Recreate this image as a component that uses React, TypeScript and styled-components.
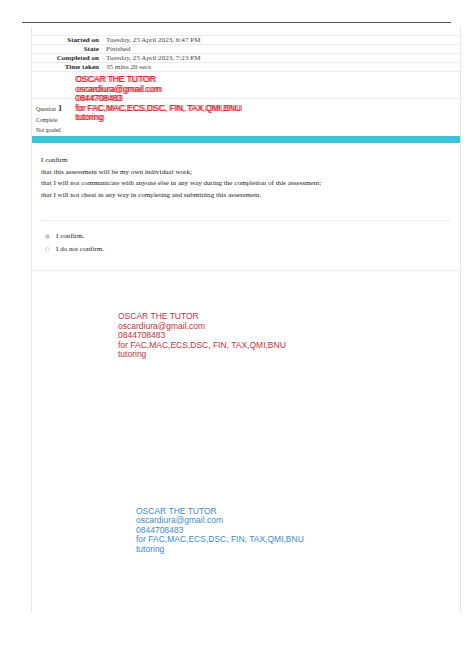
import styled, { createGlobalStyle } from "styled-components";

const GlobalStyle = createGlobalStyle`
  html, body {
    margin: 0;
    padding: 0;
    background: #ffffff;
  }
  body {
    font-family: "Liberation Serif", "Times New Roman", serif;
  }
`;

const Page = styled.div`
  width: 474px;
  height: 672px;
  overflow: hidden;
  padding-top: 22px;
  box-sizing: border-box;
`;

const TopRule = styled.div`
  margin-left: 22px;
  width: 429px;
  border-top: 1px solid #555;
`;

const Panel = styled.div`
  position: relative;
  margin: 4px 0 0 31px;
  width: 430px;
  height: 585px;
  border-left: 1px solid #e4e4e4;
  border-right: 1px solid #e4e4e4;
  box-sizing: border-box;
`;

const SummaryRow = styled.div<{ $h?: number }>`
  display: flex;
  align-items: center;
  height: ${(p) => p.$h ?? 9}px;
  border-top: 1px solid #ececec;
  box-sizing: border-box;
  font-size: 7.1px;
`;

const Label = styled.div`
  width: 67px;
  text-align: right;
  font-weight: bold;
  color: #2a2a2a;
`;

const Value = styled.div`
  margin-left: 7px;
  color: #4a4a4a;
`;

const Stamp = styled.div`
  position: absolute;
  left: 43px;
  top: 48px;
  font-family: "Liberation Sans", Arial, sans-serif;
  font-size: 8.6px;
  line-height: 9.6px;
  color: #d4111c;
  letter-spacing: -0.1px;
  text-shadow: 1.5px 0 0 rgba(212, 17, 28, 0.75);
  pointer-events: none;
`;

const QuestionInfo = styled.div`
  height: 38px;
  border-top: 1px solid #ececec;
  padding: 4px 0 0 4px;
  box-sizing: border-box;
  font-size: 5.5px;
  color: #333;
  line-height: 10.5px;
`;

const QNum = styled.span`
  font-size: 8.5px;
  font-weight: bold;
  margin-left: 2px;
`;

const TealBar = styled.div`
  height: 7px;
  background: #3cc3d6;
`;

const Content = styled.div`
  height: 128px;
  padding: 12px 9px 0 9px;
  border-bottom: 1px solid #ececec;
  box-sizing: border-box;
  font-size: 7.1px;
  color: #222;
`;

const Para = styled.div`
  line-height: 11.7px;
`;

const Separator = styled.div`
  margin-top: 18px;
  border-top: 1px solid #efefef;
`;

const Answers = styled.div`
  padding: 12px 0 0 4px;
  display: flex;
  flex-direction: column;
  gap: 6px;
`;

const Choice = styled.label`
  display: flex;
  align-items: center;
  gap: 6px;
  height: 7px;
`;

const Radio = styled.span<{ $checked?: boolean }>`
  width: 5px;
  height: 5px;
  border-radius: 50%;
  border: 1px solid #d6d6d6;
  background: ${(p) => (p.$checked ? "#c4c4c4" : "#fff")};
  box-sizing: border-box;
`;

const Watermark = styled.div<{ $color: string; $left: number; $top: number }>`
  margin: ${(p) => p.$top}px 0 0 ${(p) => p.$left}px;
  font-family: "Liberation Sans", Arial, sans-serif;
  font-size: 8.5px;
  line-height: 9.5px;
  color: ${(p) => p.$color};
`;

const stampLines = [
  "OSCAR THE TUTOR",
  "oscardiura@gmail.com",
  "0844708483",
  "for FAC,MAC,ECS,DSC, FIN, TAX,QMI,BNU",
  "tutoring",
];

const summary = [
  ["Started on", "Tuesday, 25 April 2023, 6:47 PM"],
  ["State", "Finished"],
  ["Completed on", "Tuesday, 25 April 2023, 7:23 PM"],
  ["Time taken", "35 mins 20 secs"],
];

function Lines({ lines }: { lines: string[] }) {
  return (
    <>
      {lines.map((l) => (
        <div key={l}>{l}</div>
      ))}
    </>
  );
}

export default function App() {
  return (
    <Page>
      <GlobalStyle />
      <TopRule />
      <Panel>
        <SummaryRow $h={8} style={{ borderTop: "none" }} />
        {summary.map(([k, v]) => (
          <SummaryRow key={k}>
            <Label>{k}</Label>
            <Value>{v}</Value>
          </SummaryRow>
        ))}
        <SummaryRow $h={27} />
        <QuestionInfo>
          <div>
            Question<QNum>1</QNum>
          </div>
          <div>Complete</div>
          <div>Not graded</div>
        </QuestionInfo>
        <TealBar />
        <Content>
          <Para>I confirm</Para>
          <Para>that this assessment will be my own individual work;</Para>
          <Para>
            that I will not communicate with anyone else in any way during the completion of this
            assessment;
          </Para>
          <Para>that I will not cheat in any way in completing and submitting this assessment.</Para>
          <Separator />
          <Answers>
            <Choice>
              <Radio $checked />
              I confirm.
            </Choice>
            <Choice>
              <Radio />
              I do not confirm.
            </Choice>
          </Answers>
        </Content>
        <Watermark $color="#c4303a" $left={86} $top={41}>
          <Lines lines={stampLines} />
        </Watermark>
        <Watermark $color="#3b8ad0" $left={104} $top={147}>
          <Lines lines={stampLines} />
        </Watermark>
        <Stamp>
          <Lines lines={stampLines} />
        </Stamp>
      </Panel>
    </Page>
  );
}
